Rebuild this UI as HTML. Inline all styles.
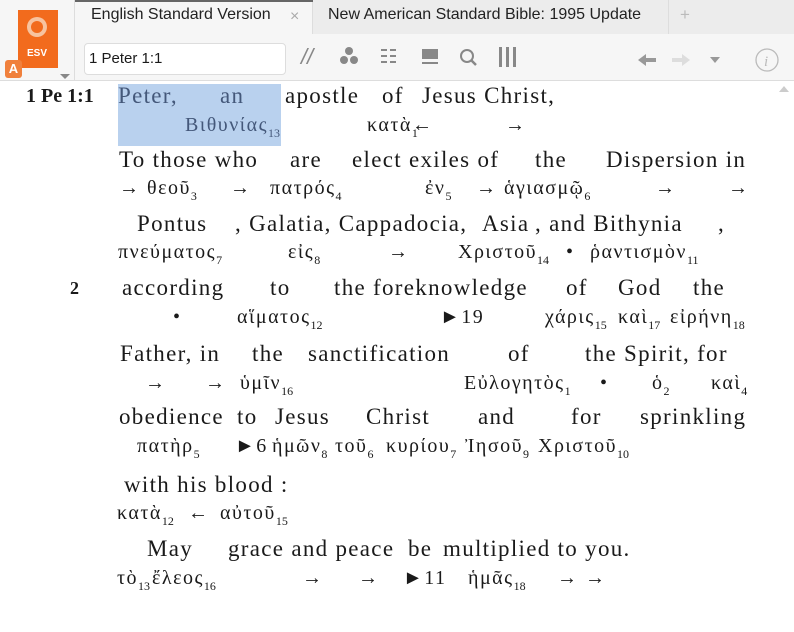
<!DOCTYPE html>
<html><head><meta charset="utf-8"><style>
body{margin:0;width:794px;height:632px;background:#fff;position:relative;overflow:hidden;font-family:"Liberation Serif",serif;color:#1a1a1a}
.a{position:absolute;white-space:pre}
.e{font-size:23px;line-height:24px;letter-spacing:1.3px}
.g{font-size:20px;line-height:22px;letter-spacing:1.5px}
sub{font-size:12px;vertical-align:-6px;line-height:0;letter-spacing:0}
.ui{font-family:"Liberation Sans",sans-serif}
</style></head><body>
<div class="a" style="left:0;top:0;width:794px;height:34px;background:#ececec"></div>
<div class="a" style="left:0;top:0;width:74px;height:80px;background:#f6f6f6;border-right:1px solid #ddd"></div>
<div class="a" style="left:75px;top:0;width:238px;height:2px;background:#666"></div>
<div class="a" style="left:75px;top:2px;width:237px;height:32px;background:#f6f6f6;border-right:1px solid #ddd"></div>
<div class="a ui" style="left:91px;top:6px;font-size:16px;color:#222">English Standard Version</div>
<div class="a ui" style="left:290px;top:8px;font-size:16px;color:#aaa">×</div>
<div class="a ui" style="left:328px;top:6px;font-size:16px;color:#222">New American Standard Bible: 1995 Update</div>
<div class="a" style="left:668px;top:0;width:1px;height:34px;background:#ddd"></div>
<div class="a ui" style="left:680px;top:5px;font-size:17px;color:#bbb">+</div>
<div class="a" style="left:75px;top:34px;width:719px;height:46px;background:#f6f6f6"></div>
<div class="a" style="left:0;top:80px;width:794px;height:1px;background:#ddd"></div>
<div class="a" style="left:18px;top:10px;width:40px;height:58px;background:#f26b1d"></div>
<div class="a" style="left:27px;top:17px;width:20px;height:20px;border-radius:50%;background:#f7c39f"></div>
<div class="a" style="left:31px;top:21px;width:12px;height:12px;border-radius:50%;background:#f26b1d"></div>
<div class="a ui" style="left:27px;top:48px;font-size:10px;color:#fff;font-weight:bold">ESV</div>
<div class="a ui" style="left:5px;top:60px;width:17px;height:18px;background:#f0803c;border-radius:3px;color:#fff;font-size:13px;font-weight:bold;text-align:center;line-height:18px">A</div>
<div class="a" style="left:60px;top:74px;border:5px solid transparent;border-top:5px solid #888"></div>
<div class="a ui" style="left:84px;top:43px;width:200px;height:30px;background:#fff;border:1px solid #ddd;border-radius:4px;font-size:15px;line-height:30px;text-indent:4px">1 Peter 1:1</div>
<div class="a ui" style="left:301px;top:44px;font-size:22px;color:#888;font-style:italic">//</div>
<svg class="a" style="left:338px;top:44px" width="190" height="28">
<g fill="#888"><circle cx="11" cy="7" r="4"/><circle cx="6" cy="16" r="4"/><circle cx="16" cy="16" r="4"/>
<rect x="43" y="5" width="6" height="2"/><rect x="52" y="5" width="6" height="2"/><rect x="43" y="11" width="6" height="2"/><rect x="52" y="11" width="6" height="2"/><rect x="43" y="17" width="6" height="2"/><rect x="52" y="17" width="6" height="2"/>
<rect x="84" y="5" width="16" height="10"/><rect x="84" y="18" width="16" height="2"/>
<rect x="161" y="3" width="3" height="20"/><rect x="168" y="3" width="3" height="20"/><rect x="175" y="3" width="3" height="20"/></g>
<circle cx="129" cy="12" r="6" fill="none" stroke="#888" stroke-width="2"/><line x1="133" y1="16" x2="138" y2="21" stroke="#888" stroke-width="2.5"/>
</svg>
<svg class="a" style="left:636px;top:48px" width="150" height="24">
<path d="M2 12 L10 6 L10 10 L20 10 L20 14 L10 14 L10 18Z" fill="#999"/>
<path d="M54 12 L46 6 L46 10 L36 10 L36 14 L46 14 L46 18Z" fill="#ddd"/>
<path d="M74 9 L84 9 L79 15Z" fill="#999"/>
<circle cx="131" cy="12" r="11" fill="none" stroke="#bbb" stroke-width="1.3"/>
<text x="128" y="18" font-family="Liberation Serif" font-style="italic" font-size="15" fill="#bbb">i</text>
</svg>
<div class="a" style="left:779px;top:86px;border:5px solid transparent;border-bottom:6px solid #ccc;border-top:0"></div>
<div class="a" style="left:118px;top:84px;width:163px;height:62px;background:#b9d1ee"></div>
<div class="a" style="left:26px;top:84px;font-weight:bold;font-size:20px;line-height:24px">1 Pe 1:1</div>
<div class="a" style="left:70px;top:276px;font-weight:bold;font-size:18px;line-height:24px">2</div>

<div class="a e" style="left:118px;top:84px;color:#44587a">Peter,</div><div class="a e" style="left:220px;top:84px;color:#44587a">an</div><div class="a e" style="left:285px;top:84px">apostle</div><div class="a e" style="left:382px;top:84px">of</div><div class="a e" style="left:422px;top:84px">Jesus Christ,</div>
<div class="a g" style="left:185px;top:114px;color:#44587a">Βιθυνίας<sub>13</sub></div><div class="a g" style="left:367px;top:114px">κατὰ<sub>1</sub></div><div class="a g" style="left:412px;top:114px">←</div><div class="a g" style="left:505px;top:114px">→</div>

<div class="a e" style="left:119px;top:148px">To those who</div><div class="a e" style="left:290px;top:148px">are</div><div class="a e" style="left:352px;top:148px">elect exiles of</div><div class="a e" style="left:535px;top:148px">the</div><div class="a e" style="left:606px;top:148px">Dispersion in</div>
<div class="a g" style="left:119px;top:177px">→ θεοῦ<sub>3</sub></div><div class="a g" style="left:230px;top:177px">→</div><div class="a g" style="left:270px;top:177px">πατρός<sub>4</sub></div><div class="a g" style="left:425px;top:177px">ἐν<sub>5</sub></div><div class="a g" style="left:476px;top:177px">→ ἁγιασμῷ<sub>6</sub></div><div class="a g" style="left:655px;top:177px">→</div><div class="a g" style="left:728px;top:177px">→</div>

<div class="a e" style="left:137px;top:212px">Pontus</div><div class="a e" style="left:235px;top:212px">, Galatia, Cappadocia,</div><div class="a e" style="left:482px;top:212px">Asia</div><div class="a e" style="left:535px;top:212px">, and Bithynia</div><div class="a e" style="left:718px;top:212px">,</div>
<div class="a g" style="left:118px;top:241px">πνεύματος<sub>7</sub></div><div class="a g" style="left:288px;top:241px">εἰς<sub>8</sub></div><div class="a g" style="left:388px;top:241px">→</div><div class="a g" style="left:458px;top:241px">Χριστοῦ<sub>14</sub></div><div class="a g" style="left:566px;top:241px">•</div><div class="a g" style="left:590px;top:241px">ῥαντισμὸν<sub>11</sub></div>

<div class="a e" style="left:122px;top:276px">according</div><div class="a e" style="left:270px;top:276px">to</div><div class="a e" style="left:334px;top:276px">the foreknowledge</div><div class="a e" style="left:566px;top:276px">of</div><div class="a e" style="left:618px;top:276px">God</div><div class="a e" style="left:693px;top:276px">the</div>
<div class="a g" style="left:173px;top:306px">•</div><div class="a g" style="left:237px;top:306px">αἵματος<sub>12</sub></div><div class="a g" style="left:440px;top:306px">►19</div><div class="a g" style="left:545px;top:306px">χάρις<sub>15</sub></div><div class="a g" style="left:618px;top:306px">καὶ<sub>17</sub></div><div class="a g" style="left:670px;top:306px">εἰρήνη<sub>18</sub></div>

<div class="a e" style="left:120px;top:342px">Father, in</div><div class="a e" style="left:252px;top:342px">the</div><div class="a e" style="left:308px;top:342px">sanctification</div><div class="a e" style="left:508px;top:342px">of</div><div class="a e" style="left:585px;top:342px">the Spirit, for</div>
<div class="a g" style="left:145px;top:372px">→</div><div class="a g" style="left:205px;top:372px">→</div><div class="a g" style="left:240px;top:372px">ὑμῖν<sub>16</sub></div><div class="a g" style="left:464px;top:372px">Εὐλογητὸς<sub>1</sub></div><div class="a g" style="left:600px;top:372px">•</div><div class="a g" style="left:652px;top:372px">ὁ<sub>2</sub></div><div class="a g" style="left:711px;top:372px">καὶ<sub>4</sub></div>

<div class="a e" style="left:119px;top:405px">obedience</div><div class="a e" style="left:237px;top:405px">to</div><div class="a e" style="left:275px;top:405px">Jesus</div><div class="a e" style="left:366px;top:405px">Christ</div><div class="a e" style="left:478px;top:405px">and</div><div class="a e" style="left:571px;top:405px">for</div><div class="a e" style="left:640px;top:405px">sprinkling</div>
<div class="a g" style="left:137px;top:435px">πατὴρ<sub>5</sub></div><div class="a g" style="left:235px;top:435px">►6</div><div class="a g" style="left:272px;top:435px">ἡμῶν<sub>8</sub></div><div class="a g" style="left:335px;top:435px">τοῦ<sub>6</sub></div><div class="a g" style="left:386px;top:435px">κυρίου<sub>7</sub></div><div class="a g" style="left:465px;top:435px">Ἰησοῦ<sub>9</sub></div><div class="a g" style="left:538px;top:435px">Χριστοῦ<sub>10</sub></div>

<div class="a e" style="left:124px;top:473px">with his blood :</div>
<div class="a g" style="left:117px;top:502px">κατὰ<sub>12</sub></div><div class="a g" style="left:188px;top:502px">←</div><div class="a g" style="left:220px;top:502px">αὐτοῦ<sub>15</sub></div>

<div class="a e" style="left:147px;top:537px">May</div><div class="a e" style="left:228px;top:537px">grace and peace</div><div class="a e" style="left:408px;top:537px">be</div><div class="a e" style="left:443px;top:537px">multiplied to you.</div>
<div class="a g" style="left:117px;top:567px">τὸ<sub>13</sub></div><div class="a g" style="left:152px;top:567px">ἔλεος<sub>16</sub></div><div class="a g" style="left:302px;top:567px">→</div><div class="a g" style="left:358px;top:567px">→</div><div class="a g" style="left:403px;top:567px">►11</div><div class="a g" style="left:468px;top:567px">ἡμᾶς<sub>18</sub></div><div class="a g" style="left:557px;top:567px">→ →</div>
</body></html>
